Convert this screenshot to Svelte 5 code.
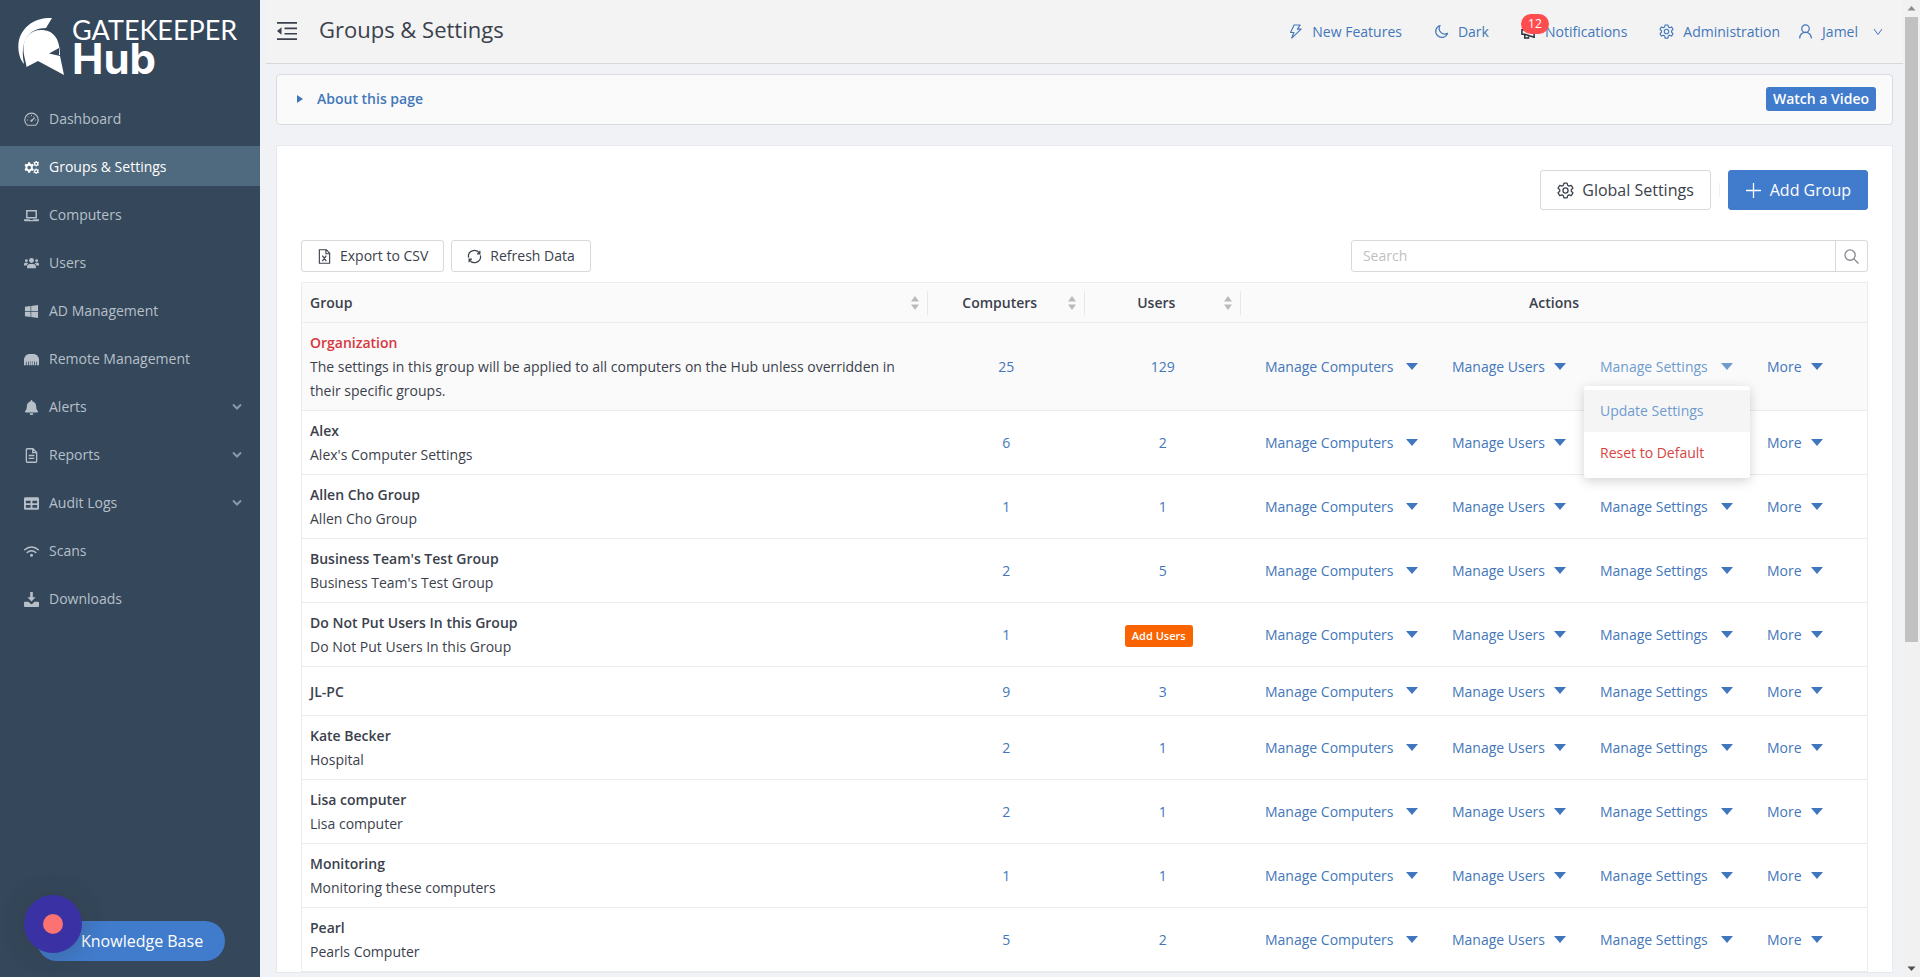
<script>
  const nav = [
    { label: 'Dashboard', icon: 'gauge' },
    { label: 'Groups & Settings', icon: 'cogs', active: true },
    { label: 'Computers', icon: 'laptop' },
    { label: 'Users', icon: 'users' },
    { label: 'AD Management', icon: 'windows' },
    { label: 'Remote Management', icon: 'arch' },
    { label: 'Alerts', icon: 'bell', sub: true },
    { label: 'Reports', icon: 'file', sub: true },
    { label: 'Audit Logs', icon: 'table', sub: true },
    { label: 'Scans', icon: 'wifi' },
    { label: 'Downloads', icon: 'download' }
  ];
  const groups = [
    { name: 'Organization', text: 'The settings in this group will be applied to all computers on the Hub unless overridden in their specific groups.', computers: 25, users: 129, root: true },
    { name: 'Alex', text: "Alex's Computer Settings", computers: 6, users: 2 },
    { name: 'Allen Cho Group', text: 'Allen Cho Group', computers: 1, users: 1 },
    { name: "Business Team's Test Group", text: "Business Team's Test Group", computers: 2, users: 5 },
    { name: 'Do Not Put Users In this Group', text: 'Do Not Put Users In this Group', computers: 1, users: 0 },
    { name: 'JL-PC', text: '', computers: 9, users: 3 },
    { name: 'Kate Becker', text: 'Hospital', computers: 2, users: 1 },
    { name: 'Lisa computer', text: 'Lisa computer', computers: 2, users: 1 },
    { name: 'Monitoring', text: 'Monitoring these computers', computers: 1, users: 1 },
    { name: 'Pearl', text: 'Pearls Computer', computers: 5, users: 2 }
  ];
  const actions = ['Manage Computers', 'Manage Users', 'Manage Settings', 'More'];
  let openMenu = $state(true);
</script>

{#snippet gear()}
  <svg class="ico" viewBox="0 0 16 16" fill="none" stroke="currentColor" stroke-width="1.2" stroke-linejoin="round">
    <path d="M6.500 1h3l.5 2.100 1.300.8 2.100-.8 1.600 2.700-1.600 1.400v1.600l1.600 1.400-1.600 2.700-2.100-.8-1.300.8-.5 2.100h-3L6 12.900l-1.300-.8-2.100.8L1 10.200l1.600-1.400V7.200L1 5.800l1.600-2.700 2.100.8L6 3.100z" />
    <circle cx="8" cy="8" r="2.400" />
  </svg>
{/snippet}

{#snippet navIcon(kind)}
  <svg class="nav-ico" viewBox="0 0 16 16" fill="currentColor">
    {#if kind === 'gauge'}
      <path d="M3.600 14.100A7.200 7.200 0 1 1 12.400 14.100z" fill="none" stroke="currentColor" stroke-width="1.200" stroke-linejoin="round" />
      <path d="M8 9.500 11 6.300" stroke="currentColor" stroke-width="1.400" stroke-linecap="round" />
      <circle cx="8" cy="9.300" r="1.200" />
      <path d="M8 3v1.500M3 8.500h1.400M11.600 8.500H13M4.300 4.800l1 1M11 4.200l-.6.6" stroke="currentColor" />
    {:else if kind === 'cogs'}
      <path fill-rule="evenodd" d="M4.500 2.500h2l.4 1.500 1 .5 1.500-.4 1 1.700L9.300 7v1.800l1.100 1.100-1 1.800-1.500-.4-1 .6-.4 1.600h-2l-.5-1.600-1-.6-1.400.4-1-1.800 1-1.100V7l-1-1.200 1-1.700 1.500.4 1-.5zM5.500 6a2 2 0 1 0 0 4 2 2 0 0 0 0-4z" />
      <circle cx="13" cy="4" r="1.700" fill="none" stroke="currentColor" stroke-width="1.500" />
      <circle cx="13" cy="12" r="1.700" fill="none" stroke="currentColor" stroke-width="1.500" />
      <path d="M13 1v1M13 6v1M10.300 2.500l.8.5M15 5l.8.500M10.300 5.500l.8-.5M15 3l.8-.5M13 9v1M13 14v1M10.300 10.500l.8.5M15 13l.8.500M10.300 13.500l.8-.5M15 11l.8-.5" stroke="currentColor" stroke-width="1.200" />
    {:else if kind === 'laptop'}
      <path d="M3 3h10v7.500H3z" fill="none" stroke="currentColor" stroke-width="1.600" />
      <path d="M0 12h6l.5.700h3L10 12h6v1a1.200 1.200 0 0 1-1.200 1.200H1.200A1.200 1.200 0 0 1 0 13z" />
    {:else if kind === 'users'}
      <circle cx="8" cy="4.800" r="2.600" />
      <circle cx="2.500" cy="5" r="1.500" />
      <circle cx="13.500" cy="5" r="1.500" />
      <path d="M3.300 13v-1.500a3 3 0 0 1 3-3h3.400a3 3 0 0 1 3 3V13zM0 10V8.700A1.500 1.500 0 0 1 1.500 7.200h2q.6 0 1 .4A4.500 4.500 0 0 0 2.800 10zM16 10V8.700a1.500 1.500 0 0 0-1.500-1.500h-2q-.6 0-1 .4a4.500 4.500 0 0 1 1.700 2.400z" />
    {:else if kind === 'windows'}
      <path d="M1 3 7 2.200v5.400H1zM7.700 2.100 15 1v6.600H7.700zM1 8.400h6v5.400L1 13zM7.700 8.400H15V15l-7.300-1.100z" />
    {:else if kind === 'arch'}
      <path d="M0 14V7l2-3.500L5 2h6l3 1.500L16 7v7h-2v-3.500h-.8V14h-1.600v-4h-.8v4H9v-4.300h-.5V14h-1V9.700H7V14H5.200v-4h-.8v4H2.800v-3.500H2V14z" />
    {:else if kind === 'bell'}
      <path d="M8 0a1 1 0 0 1 1 1v.7c2.400.5 4 2.500 4 4.900 0 3.100.8 4 1.600 4.900.7.700.2 1.800-.7 1.800H2.100c-.9 0-1.400-1.100-.7-1.800C2.200 10.600 3 9.700 3 6.600c0-2.400 1.600-4.400 4-4.900V1a1 1 0 0 1 1-1zM6 14.200h4a2 2 0 0 1-4 0z" />
    {:else if kind === 'file'}
      <path d="M3.500.8h6l4 4V14a1.200 1.200 0 0 1-1.200 1.200H3.700A1.200 1.200 0 0 1 2.500 14V1.800a1 1 0 0 1 1-1zM9.300.8V5h4.200M5 8h6M5 11h6" fill="none" stroke="currentColor" stroke-width="1.400" />
    {:else if kind === 'table'}
      <path fill-rule="evenodd" d="M1.500 1.300h13A1.500 1.500 0 0 1 16 2.800v10.400a1.500 1.500 0 0 1-1.500 1.500h-13A1.500 1.500 0 0 1 0 13.200V2.800a1.500 1.500 0 0 1 1.500-1.500zM2 5v2.700h5V5zM9 5v2.700h5V5zM2 9.500v3h5v-3zM9 9.500v3h5v-3z" />
    {:else if kind === 'wifi'}
      <path d="M.8 6.200a10.400 10.400 0 0 1 14.400 0M3.400 9a6.700 6.700 0 0 1 9.200 0" fill="none" stroke="currentColor" stroke-width="1.600" stroke-linecap="round" />
      <circle cx="8" cy="12" r="1.600" />
    {:else}
      <path d="M6.600 0h2.800v5.500h3L8 10.200 3.600 5.500h3zM1 10.500h3.800L7 12.600q1 .8 2 0l2.200-2.100H15a1 1 0 0 1 1 1V15a1 1 0 0 1-1 1H1a1 1 0 0 1-1-1v-3.500a1 1 0 0 1 1-1z" />
    {/if}
  </svg>
{/snippet}

<div class="app">
  <aside>
    <a class="logo" href="#home">
      <svg viewBox="0 0 46 57" fill="#fff">
        <path d="M34 0C17-1 3 9 .5 25-.5 35 3 43 6 46 4 36 4 27 9 19 13 13 20 10 28 10z" />
        <path d="M23 12C12 12 6 20 5.500 29 5 37 8 43 8.500 49L20 43 46 57 42 38 31 35.500l10-5.500v7l1 0C42 20 35 12 23 12z" />
      </svg>
      <span class="brand"><span class="gate">GATEKEEPER</span><span class="hub">Hub</span></span>
    </a>
    <nav>
      {#each nav as item}
        <a href="#nav" class:active={item.active}>
          {@render navIcon(item.icon)}
          <span>{item.label}</span>
          {#if item.sub}
            <svg class="sub" viewBox="0 0 10 8" fill="none" stroke="currentColor" stroke-width="2"><path d="M1 1.500l4 4 4-4" /></svg>
          {/if}
        </a>
      {/each}
    </nav>
    <div class="help">
      <button class="kb">Knowledge Base</button>
      <button class="record" aria-label="Record"><i></i></button>
    </div>
  </aside>

  <div class="page">
    <header>
      <button class="fold" aria-label="Collapse menu">
        <svg viewBox="0 0 20 18" fill="currentColor"><path d="M0 0h20v1.700H0zM7.500 5.500H20v1.700H7.500zM7.500 10.900H20v1.700H7.500zM0 16.300h20V18H0zM0 9l4.500-3.700v7.400z" /></svg>
      </button>
      <h1>Groups &amp; Settings</h1>
      <div class="tools">
        <a href="#new">
          <svg class="ico" viewBox="0 0 16 16" fill="none" stroke="currentColor" stroke-width="1.200" stroke-linejoin="round"><path d="M6.500 1H13l-3 4.500h4L4 15l2.300-6H2.700z" /></svg>
          New Features</a>
        <a href="#dark">
          <svg class="ico" viewBox="0 0 16 16" fill="none" stroke="currentColor" stroke-width="1.300" stroke-linejoin="round"><path d="M6.500 1.600A6.500 6.500 0 1 0 14.500 10 6 6 0 0 1 6.500 1.600z" /></svg>
          Dark</a>
        <a href="#notes">
          <span class="horn">
            <svg class="ico" viewBox="0 0 16 16" fill="none" stroke="#2c3038" stroke-width="1.600"><path d="M1 6h3L14 2.500v11.500L4 11H1zM4 11v4h4v-3" /></svg>
            <b>12</b>
          </span>
          Notifications</a>
        <a href="#admin">{@render gear()} Administration</a>
        <a href="#me" class="me">
          <svg class="ico" viewBox="0 0 16 16" fill="none" stroke="currentColor" stroke-width="1.300"><circle cx="8" cy="5" r="4" /><path d="M1.800 15.500C2 11.500 4.500 9 8 9s6 2.500 6.200 6.500" /></svg>
          Jamel
          <svg class="down" viewBox="0 0 10 8" fill="none" stroke="currentColor"><path d="M1 1l4 5.500L9 1" /></svg>
        </a>
      </div>
    </header>

    <main>
      <section class="about">
        <button class="toggle"><i></i>About this page</button>
        <button class="watch">Watch a Video</button>
      </section>

      <section class="card">
        <div class="top">
          <button class="big">{@render gear()}Global Settings</button>
          <i class="rule"></i>
          <button class="big primary">
            <svg class="ico" viewBox="0 0 16 16" stroke="currentColor" stroke-width="1.200"><path d="M8 1v14M1 8h14" /></svg>
            Add Group</button>
        </div>
        <div class="bar">
          <button>
            <svg class="ico" viewBox="0 0 16 16" fill="none" stroke="currentColor" stroke-width="1.200"><path d="M2.500 .8H10L13.500 4.500V15.200h-11zM9.500 1v4h4M5.700 7l4.200 6M9.900 7l-4.200 6" /></svg>
            Export to CSV</button>
          <button>
            <svg class="ico" viewBox="0 0 16 16" fill="none" stroke="currentColor" stroke-width="1.300"><path d="M1.700 9.200A6.400 6.400 0 0 1 13.300 4.400M14.300 6.800A6.400 6.400 0 0 1 2.700 11.600M13.700 1.800v3.300h-3M2.300 14.200v-3.300h3" /></svg>
            Refresh Data</button>
          <form class="search">
            <input type="text" placeholder="Search" aria-label="Search" />
            <button type="button" aria-label="Run search">
              <svg class="ico" viewBox="0 0 16 16" fill="none" stroke="currentColor" stroke-width="1.400"><circle cx="6.500" cy="6.500" r="5.500" /><path d="M10.500 10.500l5 5" /></svg>
            </button>
          </form>
        </div>

        <table>
          <thead>
            <tr>
              {#each ['Group', 'Computers', 'Users'] as title}
                <th><div><span>{title}</span>
                  <svg class="sort" viewBox="0 0 8 14" fill="#b8babd"><path d="M0 5.500 4 0l4 5.500zM0 8.500h8L4 14z" /></svg>
                </div></th>
              {/each}
              <th>Actions</th>
            </tr>
          </thead>
          <tbody>
            {#each groups as g}
              <tr class:root={g.root}>
                <td><strong>{g.name}</strong>{#if g.text}<p>{g.text}</p>{/if}</td>
                <td class="num"><a href="#c">{g.computers}</a></td>
                <td class="num">
                  {#if g.users}<a href="#u">{g.users}</a>{:else}<button class="add">Add Users</button>{/if}
                </td>
                <td>
                  <div class="acts">
                    {#each actions as a}
                      {@const open = g.root && a === 'Manage Settings'}
                      {@const covered = openMenu && g.name === 'Alex' && a === 'Manage Settings'}
                      <div class="act" class:covered>
                        <button class:hot={open} onclick={() => { if (open) openMenu = !openMenu; }}>{a}<i></i></button>
                        {#if open && openMenu}
                          <div class="menu">
                            <button class="on">Update Settings</button>
                            <button class="danger">Reset to Default</button>
                          </div>
                        {/if}
                      </div>
                    {/each}
                  </div>
                </td>
              </tr>
            {/each}
          </tbody>
        </table>
      </section>
    </main>
  </div>

  <div class="scroll" aria-hidden="true">
    <svg viewBox="0 0 17 17" fill="#8c8c8c"><path d="M4.500 10.500 8.500 6l4 4.500z" /></svg>
    <i></i>
    <svg viewBox="0 0 17 17" fill="#505050"><path d="M4.500 6.500 8.500 11l4-4.500z" /></svg>
  </div>
</div>

<style>
  :global(body) { margin: 0; overflow: hidden; }
  .app, .app :global(*) { box-sizing: border-box; }
  .app {
    display: flex; height: 100vh; overflow: hidden; background: #f0f2f5; color: #3b414c;
    font: 14px/24px "Open Sans", "Noto Sans", sans-serif;
  }
  a { color: #4377ba; text-decoration: none; }
  button { font: inherit; color: inherit; background: none; border: 0; padding: 0; cursor: pointer; white-space: nowrap; }
  .ico { width: 15px; height: 15px; flex: none; }

  aside { width: 260px; flex: none; background: #34475b; display: flex; flex-direction: column; }
  .logo { display: flex; gap: 8px; padding: 18px 0 0 18px; height: 98px; color: #fff; }
  .logo svg { width: 46px; height: 57px; flex: none; }
  .brand { display: flex; flex-direction: column; }
  .gate { font: 400 27px/24px Lato, sans-serif; }
  .hub { font: 700 42px/34px Inter, sans-serif; }
  nav { display: flex; flex-direction: column; gap: 8px; }
  nav a { display: flex; align-items: center; gap: 10px; height: 40px; padding: 2px 18px 0 24px; color: #b7c0c8; }
  nav a.active { background: #4f697e; color: #fff; }
  .nav-ico { width: 15px; height: 15px; flex: none; }
  .sub { width: 10px; height: 8px; margin-left: auto; color: #8b98aa; }
  .help { position: relative; margin: auto 0 16px 37px; }
  .kb { display: block; height: 40px; width: 188px; border-radius: 20px; background: #417bcb; color: #fff; font-size: 16px; padding: 0 20px 0 44px; text-align: left; }
  .record {
    position: absolute; left: -13px; top: -26px; width: 58px; height: 58px; border-radius: 50%;
    background: #3a31a5; display: grid; place-items: center; box-shadow: 0 0 24px rgba(50, 50, 40, .3);
  }
  .record i { width: 20px; height: 20px; border-radius: 50%; background: #fa7272; }

  .page { flex: 1; min-width: 0; overflow: hidden; }
  header { display: flex; align-items: center; height: 64px; margin-left: 6px; padding: 0 20px 2px 11px; background: #f3f3f3; border-bottom: 1px solid #d5d7da; }
  .fold { height: 18px; width: 20px; color: #3b414c; }
  .fold svg { display: block; width: 20px; height: 18px; }
  h1 { margin: 0 0 0 22px; padding-bottom: 4px; font-size: 22px; line-height: 32px; font-weight: 500; }
  .tools { display: flex; gap: 32px; margin-left: auto; padding-top: 2px; }
  .tools a { display: flex; align-items: center; gap: 9px; white-space: nowrap; }
  .tools .me { margin-left: -14px; }
  .horn { position: relative; display: flex; }
  .horn b { position: absolute; left: 0; top: -10px; height: 20px; width: 28px; border-radius: 10px; background: #ff4d4f; color: #fff; font-size: 12px; line-height: 20px; font-weight: 400; text-align: center; }
  .down { width: 10px; height: 8px; margin-left: 6px; }

  main { padding: 10px 10px 0 16px; }
  .about { display: flex; justify-content: space-between; align-items: center; height: 51px; padding: 0 16px 2px 20px; background: #fafafa; border: 1px solid #d9dbde; border-radius: 4px; }
  .toggle { display: flex; align-items: center; gap: 14px; color: #4377ba; font-weight: 600; }
  .toggle i { border: 4px solid transparent; border-left: 6px solid #3f76bd; border-right: 0; }
  .watch { height: 24px; padding: 0 7px; border-radius: 3px; background: #417bcb; color: #fff; font-weight: 600; }

  .card { margin-top: 20px; padding: 24px 24px 0; background: #fff; border: 1px solid #e6e9ed; }
  .top { display: flex; justify-content: flex-end; align-items: center; }
  .top .rule { width: 1px; height: 14px; margin: 0 8px; background: #f0f0f0; }
  .big { display: flex; align-items: center; gap: 8px; height: 40px; padding: 0 16px; font-size: 16px; border: 1px solid #d9d9d9; border-radius: 3px; }
  .big .ico { width: 17px; height: 17px; }
  .primary { background: #417bcb; border-color: #417bcb; color: #fff; }
  .bar { display: flex; gap: 7px; margin: 30px 0 10px; }
  .bar > button { display: flex; align-items: center; gap: 8px; height: 32px; padding: 0 15px; border: 1px solid #d9d9d9; border-radius: 3px; }
  .search { display: flex; width: 33%; margin-left: auto; border: 1px solid #d9d9d9; border-radius: 3px; height: 32px; }
  .search input { flex: 1; min-width: 0; border: 0; outline: 0; background: none; padding: 0 11px; font: inherit; }
  .search input::placeholder { color: #bfbfbf; }
  .search button { display: grid; place-items: center; width: 32px; border-left: 1px solid #d9d9d9; color: #85888d; }

  table { width: 100%; table-layout: fixed; border-collapse: separate; border-spacing: 0; border: solid #ececee; border-width: 1px 1px 0; }
  th { height: 40px; padding: 0; background: #fafafa; border-bottom: 1px solid #ececee; font-weight: 600; }
  th div { display: flex; align-items: center; height: 24px; padding: 0 8px; border-right: 1px solid #e8e8ea; }
  th span { flex: 1; padding-right: 4px; text-align: center; }
  th:first-child span { text-align: left; }
  th:nth-child(1), th:nth-child(4) { width: 40%; }
  .sort { width: 8px; height: 14px; }
  td { height: 49px; padding: 8px 8px 7px; border-bottom: 1px solid #ececee; }
  strong { font-weight: 600; display: block; }
  p { margin: 0; }
  .root td { background: #fafafa; }
  .root strong { color: #d9363e; }
  .num { text-align: center; }
  .add { height: 22px; margin-right: 8px; padding: 0 7px; background: #fa6400; color: #fff; border-radius: 3px; font-size: 11px; line-height: 22px; font-weight: 600; }
  .acts { display: grid; grid-template-columns: 187px 148px 167px 90px; padding-left: 16px; }
  .act { position: relative; padding-right: 34px; }
  .act > button { display: flex; align-items: center; justify-content: space-between; width: 100%; color: #4377ba; }
  .act > button i { margin-bottom: 2px; border: 6px solid transparent; border-top: 7px solid #3f76bd; border-bottom: 0; }
  .act > .hot { color: #6f9ccf; }
  .act > .hot i { border-top-color: #6f9ccf; }
  .covered { visibility: hidden; }
  .menu { position: absolute; z-index: 2; left: -16px; top: 31px; width: 166px; padding: 4px 0; background: #fff; border-radius: 3px; box-shadow: 0 3px 12px rgba(0, 0, 0, .18); }
  .menu button { display: block; width: 100%; height: 42px; padding: 0 16px; text-align: left; }
  .menu .on { background: #f5f5f5; color: #6f9ccf; }
  .menu .danger { color: #d8443f; }

  .scroll { width: 17px; flex: none; display: flex; flex-direction: column; align-items: center; background: #f1f1f1; }
  .scroll svg { width: 17px; height: 17px; flex: none; }
  .scroll i { width: 13px; height: 64%; background: #c1c1c1; margin-bottom: auto; }
</style>
